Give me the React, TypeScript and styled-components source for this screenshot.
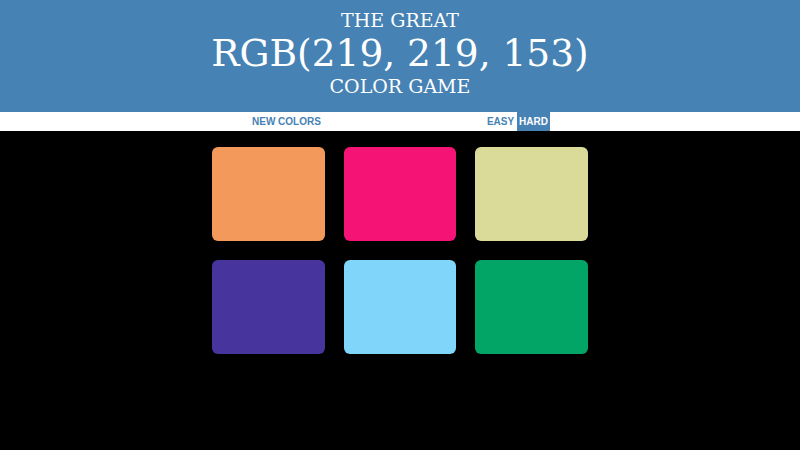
import React, { useState } from 'react'
import styled, { createGlobalStyle } from 'styled-components'

const GlobalStyle = createGlobalStyle`
  html, body {
    margin: 0;
    background: #000;
  }
`

const Header = styled.h1`
  margin: 0;
  padding: 8px 0 13px;
  background: steelblue;
  color: #fff;
  text-align: center;
  font-family: "DejaVu Serif", serif;
  font-weight: normal;
  text-transform: uppercase;
`

const Line = styled.span<{ $big?: boolean }>`
  display: block;
  font-size: ${p => (p.$big ? '37.5px' : '19px')};
  line-height: ${p => (p.$big ? '41px' : '25px')};
`

const Stripe = styled.div`
  background: #fff;
  height: 19px;
  padding-left: 2px;
  display: flex;
  justify-content: center;
`

const StripeInner = styled.div`
  width: 298px;
  display: flex;
  justify-content: space-between;
  align-items: stretch;
`

const Modes = styled.div`
  display: flex;
  gap: 3px;
`

const Button = styled.button<{ $selected?: boolean }>`
  border: none;
  margin: 0;
  padding: 1px ${p => (p.$selected ? '2px' : '0')} 0;
  height: 19px;
  line-height: 18px;
  font-family: "Liberation Sans", Arial, sans-serif;
  font-size: 10px;
  font-weight: bold;
  text-transform: uppercase;
  color: ${p => (p.$selected ? '#fff' : 'steelblue')};
  background: ${p => (p.$selected ? 'steelblue' : 'transparent')};
  cursor: pointer;
`

const Board = styled.div`
  width: 375.5px;
  margin: 16px auto 0;
  display: grid;
  grid-template-columns: repeat(3, 112.5px);
  grid-auto-rows: 94px;
  column-gap: 19px;
  row-gap: 18.5px;
`

const Square = styled.div<{ $color: string }>`
  background: ${p => p.$color};
  border-radius: 6px;
`

const colors = [
  'rgb(244, 153, 92)',
  'rgb(245, 20, 117)',
  'rgb(219, 219, 153)',
  'rgb(71, 52, 157)',
  'rgb(128, 214, 250)',
  'rgb(2, 165, 102)',
]

export default function App() {
  const [mode, setMode] = useState<'easy' | 'hard'>('hard')
  const target = colors[2]

  return <>
    <GlobalStyle />
    <Header>
      <Line>The Great</Line>
      <Line $big>{target.replace('rgb', 'RGB')}</Line>
      <Line>Color Game</Line>
    </Header>
    <Stripe>
      <StripeInner>
        <Button>New Colors</Button>
        <Modes>
          <Button $selected={mode === 'easy'} onClick={() => setMode('easy')}>Easy</Button>
          <Button $selected={mode === 'hard'} onClick={() => setMode('hard')}>Hard</Button>
        </Modes>
      </StripeInner>
    </Stripe>
    <Board>
      {colors.map(c => <Square key={c} $color={c} />)}
    </Board>
  </>
}
